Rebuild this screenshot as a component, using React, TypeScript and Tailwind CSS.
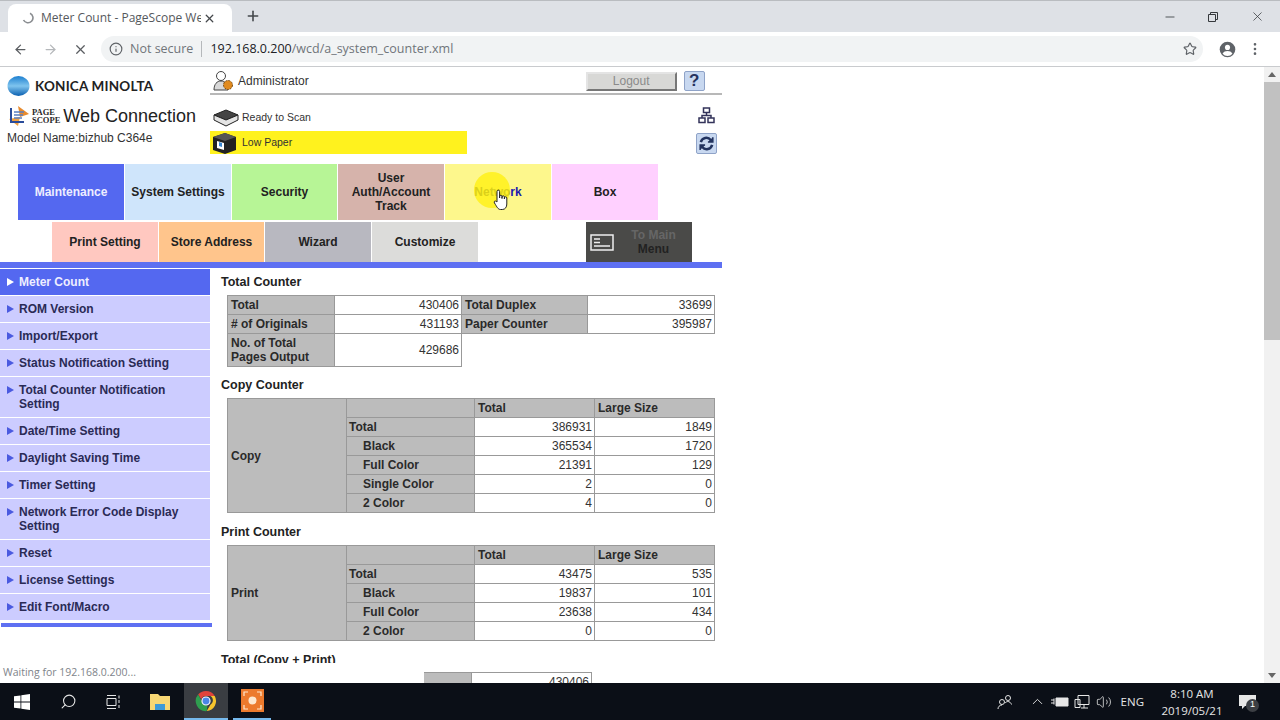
import { ArrowLeft, ArrowRight, Info, MoreVertical, Plus, Star, X, Minus, ChevronUp, Volume2, Search } from "lucide-react";

const menu = [
  { label: "Meter Count", active: true },
  { label: "ROM Version" },
  { label: "Import/Export" },
  { label: "Status Notification Setting" },
  { label: "Total Counter Notification Setting" },
  { label: "Date/Time Setting" },
  { label: "Daylight Saving Time" },
  { label: "Timer Setting" },
  { label: "Network Error Code Display Setting" },
  { label: "Reset" },
  { label: "License Settings" },
  { label: "Edit Font/Macro" },
];

const copyRows = [
  ["Total", "386931", "1849", false],
  ["Black", "365534", "1720", true],
  ["Full Color", "21391", "129", true],
  ["Single Color", "2", "0", true],
  ["2 Color", "4", "0", true],
] as const;

const printRows = [
  ["Total", "43475", "535", false],
  ["Black", "19837", "101", true],
  ["Full Color", "23638", "434", true],
  ["2 Color", "0", "0", true],
] as const;

const labelCell = "border border-[#999] bg-[#bcbcbc] px-[3px] text-left align-middle font-bold text-[#2a2a2a]";
const valueCell = "border border-[#999] bg-white px-[2px] text-right align-middle text-[#333]";

function CounterTable({ name, rows }: { name: string; rows: readonly (readonly [string, string, string, boolean])[] }) {
  return (
    <table className="ml-[6px] w-[487px] table-fixed border-collapse text-[12px] leading-[14px]">
      <colgroup>
        <col className="w-[119px]" />
        <col className="w-[128px]" />
        <col className="w-[120px]" />
        <col className="w-[120px]" />
      </colgroup>
      <tbody>
        <tr className="h-[19px]">
          <td rowSpan={rows.length + 1} className={labelCell}>{name}</td>
          <td className={labelCell} />
          <td className={labelCell}>Total</td>
          <td className={labelCell}>Large Size</td>
        </tr>
        {rows.map(([label, total, large, indent]) => (
          <tr key={label} className="h-[19px]">
            <td className={`${labelCell} ${indent ? "pl-[16px]" : "pl-[2px]"}`}>{label}</td>
            <td className={valueCell}>{total}</td>
            <td className={valueCell}>{large}</td>
          </tr>
        ))}
      </tbody>
    </table>
  );
}

function SectionTitle({ children, className }: { children: string; className: string }) {
  return <h2 className={`text-[12.5px] leading-[15px] font-bold text-[#222] ${className}`}>{children}</h2>;
}

function Tab({ color, children, className = "" }: { color: string; children: React.ReactNode; className?: string }) {
  return (
    <div className={`flex items-center justify-center text-center text-[12px] leading-[14px] font-bold text-[#222] ${color} ${className}`}>
      {children}
    </div>
  );
}

function ChromeIcon() {
  return (
    <svg width="22" height="22" viewBox="0 0 24 24">
      <path d="M12 1a11 11 0 0 1 9.5 5.5H12a5.5 5.5 0 0 0-5.2 3.7L3.4 5A11 11 0 0 1 12 1z" fill="#e0433a" />
      <path d="M21.5 6.5A11 11 0 0 1 12.8 23l4-7a5.5 5.5 0 0 0 0-9.5z" fill="#f7c52d" />
      <path d="M12.8 23A11 11 0 0 1 3.4 5l4.2 7.5a5.5 5.5 0 0 0 6 4.3z" fill="#2f9e4f" />
      <circle cx="12" cy="12" r="4.4" fill="#4a86e8" stroke="#fff" strokeWidth="1.2" />
    </svg>
  );
}

export default function App() {
  return (
    <div className="flex h-[720px] w-[1280px] flex-col overflow-hidden bg-white font-['Liberation_Sans',Arial,sans-serif]">
      {/* Tab strip */}
      <div className="flex h-[32px] shrink-0 items-end border-t border-[#b9bcc0] bg-[#dee1e6] pl-[8px]">
        <div className="flex h-[28px] w-[224px] items-center rounded-t-[8px] bg-white pl-[14px] pr-[10px]">
          <svg width="12" height="12" viewBox="0 0 12 12" className="shrink-0">
            <path d="M8 1.2A5 5 0 1 1 1.5 8" fill="none" stroke="#8a8d91" strokeWidth="1.6" />
          </svg>
          <span className="ml-[7px] w-[160px] overflow-hidden whitespace-nowrap font-['Open_Sans',sans-serif] text-[12px] text-[#55585c]">
            Meter Count - PageScope Web C
          </span>
          <X size={13} strokeWidth={2.4} className="ml-[2px] text-[#44474b]" />
        </div>
        <Plus size={16} strokeWidth={2.4} className="mb-[8px] ml-[13px] text-[#44474b]" />
        <div className="ml-auto flex h-full items-center self-start pr-[15px] text-[#35383c]">
          <Minus size={14} strokeWidth={1.4} className="mr-[30px]" />
          <svg width="12" height="12" viewBox="0 0 12 12" fill="none" stroke="currentColor" className="mr-[31px]">
            <path d="M1.5 3.5h7v7h-7zM3.5 3.5v-2h7v7h-2" />
          </svg>
          <X size={15} strokeWidth={1.2} />
        </div>
      </div>

      {/* Toolbar */}
      <div className="flex h-[35px] shrink-0 items-center border-b border-[#c9cbce] bg-white pl-[13px] pr-[11px]">
        <ArrowLeft size={15} strokeWidth={2} className="text-[#5a5d61]" />
        <ArrowRight size={15} strokeWidth={2} className="ml-[15px] text-[#b4b7ba]" />
        <X size={15} strokeWidth={2} className="ml-[15px] text-[#5a5d61]" />
        <div className="ml-[13px] flex h-[26px] w-[1102px] items-center rounded-full bg-[#f1f3f4] pl-[8px] pr-[6px] font-['Open_Sans',sans-serif] text-[12.5px]">
          <Info size={14} strokeWidth={2} className="text-[#5f6368]" />
          <span className="ml-[7px] text-[#70757a]">Not secure</span>
          <span className="ml-[8px] h-[16px] w-px bg-[#b5b8bb]" />
          <span className="ml-[8px] text-[#202124]">192.168.0.200</span>
          <span className="text-[#70757a]">/wcd/a_system_counter.xml</span>
          <Star size={14} strokeWidth={2} className="ml-auto text-[#5f6368]" />
        </div>
        <svg width="17" height="17" viewBox="0 0 24 24" className="ml-[16px] shrink-0">
          <circle cx="12" cy="12" r="11" fill="#5f6368" />
          <circle cx="12" cy="9" r="3.6" fill="#fff" />
          <path d="M5 18c1.5-3 4-4 7-4s5.5 1 7 4a9 9 0 0 1-14 0z" fill="#fff" />
        </svg>
        <MoreVertical size={16} strokeWidth={2} className="ml-[11px] text-[#5f6368]" />
      </div>

      {/* Page viewport */}
      <div className="relative flex min-h-0 flex-1">
        <div className="min-w-0 flex-1 overflow-hidden">
          <div className="w-[722px]">
            {/* Header */}
            <div className="flex h-[97px]">
              <div className="w-[210px] pl-[7px] pt-[9px]">
                <div className="flex h-[20px] items-center">
                  <svg width="23" height="20" viewBox="0 0 23 20">
                    <defs>
                      <linearGradient id="km" x1="0" y1="0" x2="0" y2="1">
                        <stop offset="0" stopColor="#1c7fd0" />
                        <stop offset="0.5" stopColor="#7fc4ee" />
                        <stop offset="1" stopColor="#0a5fb0" />
                      </linearGradient>
                    </defs>
                    <ellipse cx="11.5" cy="10" rx="11" ry="10" fill="url(#km)" />
                  </svg>
                  <span className="ml-[5px] text-[13.5px] font-['Lato',sans-serif] font-bold tracking-[0.2px] text-[#222]">KONICA MINOLTA</span>
                </div>
                <div className="mt-[7px] flex h-[26px] items-center">
                  <svg width="22" height="22" viewBox="0 0 22 22" className="ml-[1px]">
                    <path d="M10 1l11 8-9 3z" fill="#e88b2e" />
                    <path d="M1 14l9 7 2-9z" fill="#f0a040" />
                    <path d="M3 3v14h13" fill="none" stroke="#2a4c9a" strokeWidth="2" />
                    <path d="M6 7h10M6 10h9M6 13h8" stroke="#5a7fc0" strokeWidth="1.5" />
                  </svg>
                  <span className="ml-[2px] font-['Liberation_Serif',serif] text-[8.5px] leading-[8px] font-bold text-[#2a2a2a]">PAGE<br />SCOPE</span>
                  <span className="ml-[3px] text-[18px] leading-[22px] text-[#222]">Web Connection</span>
                </div>
                <p className="mt-[2px] text-[12px] leading-[14px] text-[#333]">Model Name:bizhub C364e</p>
              </div>

              <div className="w-[512px] pt-[2px]">
                <div className="flex h-[26px] items-center border-b-2 border-[#b8b8b8] pl-[2px]">
                  <svg width="22" height="22" viewBox="0 0 22 22">
                    <circle cx="9" cy="6" r="4.5" fill="#fff" stroke="#444" />
                    <path d="M2 20c0-6 3-9 7-9s7 3 7 9z" fill="#d8d8d8" stroke="#444" />
                    <circle cx="16" cy="15" r="4.5" fill="#e08a1e" stroke="#7a4a10" strokeDasharray="2 1" />
                  </svg>
                  <span className="ml-[4px] text-[12px] text-[#333]">Administrator</span>
                  <button className="ml-[277px] h-[19px] w-[91px] border-2 border-t-[#e4e4e4] border-l-[#e4e4e4] border-r-[#777] border-b-[#777] bg-[#d8d8d6] text-[12px] leading-[14px] text-[#8a8a8a]">
                    Logout
                  </button>
                  <div className="ml-[7px] flex h-[20px] w-[21px] items-center justify-center rounded-[2px] border border-[#8fa3c8] bg-[#c8d8f0] text-[17px] font-bold text-[#26335f]">?</div>
                </div>
                <div className="flex">
                  <div className="pt-[13px]">
                    <div className="flex h-[19px] items-center pl-[3px]">
                      <svg width="26" height="18" viewBox="0 0 26 18">
                        <path d="M1 6l12-5 12 5-12 5z" fill="#444" stroke="#222" />
                        <path d="M1 6v5l12 6 12-6V6l-12 5z" fill="#e4e4e4" stroke="#222" />
                      </svg>
                      <span className="ml-[3px] text-[10.5px] text-[#333]">Ready to Scan</span>
                    </div>
                    <div className="mt-[4px] flex h-[23px] w-[257px] items-center bg-[#fff21e] pl-[1px]">
                      <svg width="27" height="22" viewBox="0 0 27 22">
                        <path d="M2 5l12-4 11 4v13l-11 4-12-4z" fill="#222" />
                        <path d="M2 5l12 4 11-4-11-4z" fill="#555" />
                        <path d="M6 9l7 2v7l-7-2z" fill="#fff" />
                        <path d="M8 10l3 1v4l-3-1z" fill="#3a86d0" />
                      </svg>
                      <span className="ml-[4px] text-[10.5px] text-[#333]">Low Paper</span>
                    </div>
                  </div>
                  <div className="ml-auto mr-[5px] flex w-[21px] flex-col items-center pt-[12px]">
                    <svg width="17" height="17" viewBox="0 0 17 17" fill="none" stroke="#33335a" strokeWidth="1.5">
                      <path d="M5.5 1h6v4.5h-6zM1 11h6v4.5H1zM10 11h6v4.5h-6zM8.5 5.5V8.5M4 11V8.5h9V11" />
                    </svg>
                    <div className="mt-[9px] flex h-[21px] w-[21px] items-center justify-center rounded-[2px] border border-[#8fa3c8] bg-[#c8d8f0]">
                      <svg width="17" height="17" viewBox="0 0 24 24" fill="none" stroke="#22335f" strokeWidth="3.5">
                        <path d="M4 10a8 8 0 0 1 14-3l2 2M20 14a8 8 0 0 1-14 3l-2-2" />
                        <path d="M21 3v7h-7M3 21v-7h7" strokeWidth="2" fill="#22335f" />
                      </svg>
                    </div>
                  </div>
                </div>
              </div>
            </div>

            {/* Main tabs */}
            <div className="flex h-[56px] gap-px pl-[18px]">
              <Tab color="bg-[#5468f0] !text-[#eef]" className="w-[106px]">Maintenance</Tab>
              <Tab color="bg-[#cfe5fb]" className="w-[106px]">System Settings</Tab>
              <Tab color="bg-[#b7f596]" className="w-[105px]">Security</Tab>
              <Tab color="bg-[#d6b3ab]" className="w-[106px]">User<br />Auth/Account<br />Track</Tab>
              <Tab color="bg-[#fdf78c]" className="w-[106px]">
                <span className="text-[#858558]">Netwo</span>
                <span className="text-[#1a1ab0]">rk</span>
              </Tab>
              <Tab color="bg-[#ffd0ff]" className="w-[106px]">Box</Tab>
            </div>

            {/* Sub tabs */}
            <div className="mt-[2px] flex h-[40px] pl-[52px]">
              <Tab color="bg-[#ffc8c0]" className="w-[106px]">Print Setting</Tab>
              <Tab color="bg-[#ffc58c]" className="ml-px w-[105px]">Store Address</Tab>
              <Tab color="bg-[#b8b8c0]" className="ml-px w-[106px]">Wizard</Tab>
              <Tab color="bg-[#dcdcda]" className="ml-px w-[106px]">Customize</Tab>
              <div className="ml-[108px] flex w-[106px] items-center bg-[#4a4a48] pl-[4px] text-[12px] leading-[14px] font-bold">
                <svg width="24" height="17" viewBox="0 0 24 17" fill="none" stroke="#eee" strokeWidth="1.5">
                  <path d="M1 1h22v15H1z" />
                  <path d="M4 5h6M4 8.5h6M4 12h16" />
                </svg>
                <span className="ml-[7px] w-[65px] text-center text-[#222]"><span className="text-[#666]">To Main</span><br />Menu</span>
              </div>
            </div>
            <div className="h-[6px] bg-[#5e70f2]" />

            {/* Side menu and counters */}
            <div className="mt-px flex">
              <div className="w-[212px]">
                <ul className="flex w-[210px] flex-col gap-px">
                  {menu.map((item) => (
                    <li
                      key={item.label}
                      className={`flex min-h-[26px] items-start py-[6px] pl-[7px] pr-[6px] text-[12px] leading-[14px] font-bold ${item.active ? "bg-[#5468f0] text-[#eef]" : "bg-[#ccccff] text-[#2a2a55]"}`}
                    >
                      <svg width="7" height="8" viewBox="0 0 7 8" className={`mt-[3px] shrink-0 ${item.active ? "fill-white" : "fill-[#4a5ae0]"}`}>
                        <path d="M0 0l7 4-7 4z" />
                      </svg>
                      <span className="ml-[5px]">{item.label}</span>
                    </li>
                  ))}
                </ul>
                <div className="mt-[3px] ml-px h-[4px] bg-[#5e70f2]" />
              </div>

              <div className="w-[510px] pl-[9px] pt-[6px]">
                <SectionTitle className="">Total Counter</SectionTitle>
                <table className="ml-[6px] mt-[5px] w-[487px] table-fixed border-collapse text-[12px] leading-[14px]">
                  <colgroup>
                    <col className="w-[107px]" />
                    <col className="w-[127px]" />
                    <col className="w-[126px]" />
                    <col className="w-[127px]" />
                  </colgroup>
                  <tbody>
                    <tr className="h-[19px]">
                      <td className={labelCell}>Total</td>
                      <td className={valueCell}>430406</td>
                      <td className={labelCell}>Total Duplex</td>
                      <td className={valueCell}>33699</td>
                    </tr>
                    <tr className="h-[19px]">
                      <td className={labelCell}># of Originals</td>
                      <td className={valueCell}>431193</td>
                      <td className={labelCell}>Paper Counter</td>
                      <td className={valueCell}>395987</td>
                    </tr>
                    <tr className="h-[33px]">
                      <td className={labelCell}>No. of Total<br />Pages Output</td>
                      <td className={valueCell}>429686</td>
                    </tr>
                  </tbody>
                </table>

                <SectionTitle className="mt-[11px]">Copy Counter</SectionTitle>
                <div className="mt-[5px]"><CounterTable name="Copy" rows={copyRows} /></div>

                <SectionTitle className="mt-[12px]">Print Counter</SectionTitle>
                <div className="mt-[5px]"><CounterTable name="Print" rows={printRows} /></div>

                <SectionTitle className="mt-[12px]">Total (Copy + Print)</SectionTitle>
                <table className="ml-[6px] mt-[4px] w-[364px] table-fixed border-collapse text-[12px] leading-[14px]">
                  <colgroup>
                    <col className="w-[244px]" />
                    <col className="w-[120px]" />
                  </colgroup>
                  <tbody>
                    <tr className="h-[19px]">
                      <td className={labelCell} />
                      <td className={valueCell}>430406</td>
                    </tr>
                  </tbody>
                </table>
              </div>
            </div>
          </div>
        </div>

        {/* Scrollbar */}
        <div className="flex w-[16px] shrink-0 flex-col bg-[#f1f1f1]">
          <div className="mx-auto mt-[5px] h-0 w-0 border-x-[4px] border-b-[5px] border-x-transparent border-b-[#666]" />
          <div className="mt-[5px] h-[258px] bg-[#c1c1c1]" />
          <div className="mx-auto mb-[5px] mt-auto h-0 w-0 border-x-[4px] border-t-[5px] border-x-transparent border-t-[#666]" />
        </div>

        {/* Loading status bubble */}
        <div className="absolute bottom-0 left-0 flex h-[20px] w-[424px] items-center rounded-tr-[3px] bg-white pl-[3px] font-['Open_Sans',sans-serif] text-[10.5px] text-[#80848a]">
          Waiting for 192.168.0.200...
        </div>

        {/* Click highlight and hand cursor */}
        <div className="absolute left-[474px] top-[105px] h-[36px] w-[36px] rounded-full bg-[#fff000]/70" />
        <svg width="16" height="22" viewBox="0 0 16 22" className="absolute left-[493px] top-[122px]">
          <path d="M4 11V2.5a1.3 1.3 0 0 1 2.6 0V9V7.5a1.2 1.2 0 0 1 2.4 0V9.5V8a1.2 1.2 0 0 1 2.4 0v2V9a1.2 1.2 0 0 1 2.4 0v6c0 3-1.5 5.5-4.5 5.5H7.5C5 20.500 4 18 1.500 14c-1-1.500.5-3 2.500-1z" fill="#fff" stroke="#222" strokeWidth="1" />
        </svg>
      </div>

      {/* Taskbar */}
      <div className="flex h-[37px] shrink-0 items-center bg-[#0b0f17] text-[#e6e6e6]">
        <div className="flex h-full w-[44px] items-center justify-center">
          <svg width="16" height="16" viewBox="0 0 16 16" fill="#fff">
            <path d="M0 2.300l6.500-.9v6.200H0zM7.300 1.300L16 0v7.600H7.300zM0 8.400h6.500v6.200L0 13.700zM7.300 8.400H16V16l-8.700-1.300z" />
          </svg>
        </div>
        <div className="flex h-full w-[48px] items-center justify-center">
          <Search size={17} strokeWidth={1.5} className="-scale-x-100" />
        </div>
        <div className="flex h-full w-[44px] items-center justify-center">
          <svg width="16" height="16" viewBox="0 0 16 16" fill="none" stroke="#e6e6e6">
            <path d="M1 4.500h9v7H1zM1 1.500h9M1 14.500h9M13 1.500v3M13 6v3M13 11v3" />
          </svg>
        </div>
        <div className="flex h-full w-[48px] items-center justify-center">
          <svg width="20" height="17" viewBox="0 0 20 17">
            <path d="M0 1h8l2 2h10v14H0z" fill="#f7d774" />
            <path d="M5 11h10v6H5z" fill="#3d9ad8" />
          </svg>
        </div>
        <div className="flex h-full w-[44px] flex-col items-center justify-center border-b-2 border-[#76b9ed] bg-[#3a3d42]">
          <ChromeIcon />
        </div>
        <div className="ml-[5px] flex h-full w-[38px] items-center justify-center border-b-2 border-[#76b9ed]">
          <svg width="23" height="23" viewBox="0 0 23 23">
            <rect width="23" height="23" fill="#ec7a2d" />
            <circle cx="11.500" cy="11.500" r="4" fill="#fde8d0" />
            <path d="M3 7V3h4M16 3h4v4M20 16v4h-4M7 20H3v-4" fill="none" stroke="#fde8d0" strokeWidth="1.2" />
          </svg>
        </div>

        <div className="ml-auto flex h-full items-center pr-[17px]">
          <svg width="16" height="16" viewBox="0 0 16 16" fill="none" stroke="#e6e6e6">
            <circle cx="5" cy="8" r="2.500" />
            <circle cx="11" cy="4" r="2.500" />
            <path d="M1 15c0-2 1.500-4 4-4M8 9c1-1 2-1.500 3-1.500s3 1 3.500 3" />
          </svg>
          <ChevronUp size={17} strokeWidth={1.3} className="ml-[16px]" />
          <svg width="18" height="13" viewBox="0 0 18 13" fill="none" stroke="#e6e6e6" className="ml-[5px]">
            <path d="M5 3h12v8H5z" fill="#e6e6e6" />
            <path d="M0 5h3M0 8h3M3 3.500v6" />
          </svg>
          <svg width="16" height="15" viewBox="0 0 16 15" fill="none" stroke="#e6e6e6" className="ml-[5px]">
            <path d="M4 1.500h11v9H4zM7 14h7M10 11v3M1 5.500h5v8H1z" />
          </svg>
          <Volume2 size={16} strokeWidth={1.2} className="ml-[6px]" />
          <span className="ml-[9px] font-['Open_Sans',sans-serif] text-[11.5px]">ENG</span>
          <div className="ml-[14px] w-[68px] text-center font-['Open_Sans',sans-serif] text-[11.5px] leading-[17px]">
            8:10 AM<br />2019/05/21
          </div>
          <div className="relative ml-[13px] w-[24px]">
            <svg width="17" height="14" viewBox="0 0 17 14" fill="#e6e6e6">
              <path d="M0 0h17v11H6l-3 3v-3H0z" />
            </svg>
            <span className="absolute left-[7px] top-[4px] flex h-[13px] w-[13px] items-center justify-center rounded-full bg-[#3c3f44] text-[9px] text-white">1</span>
          </div>
        </div>
      </div>
    </div>
  );
}
